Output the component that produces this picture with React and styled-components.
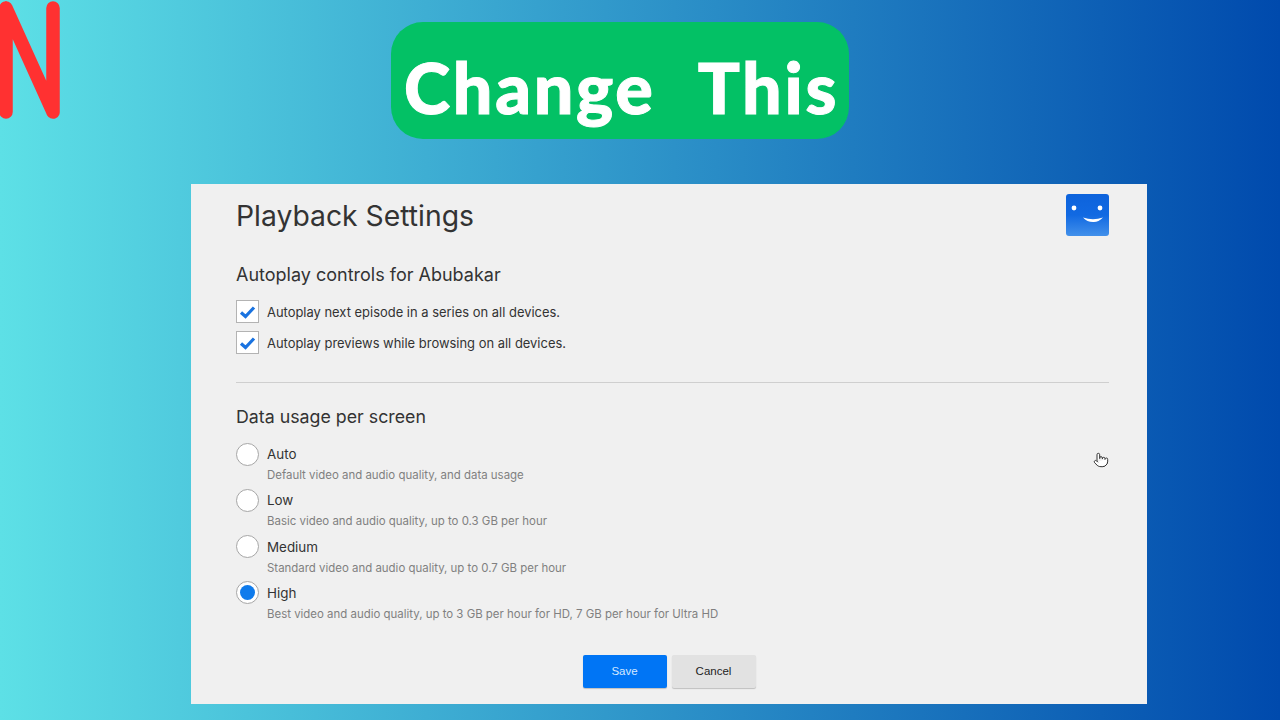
import React from 'react';
import styled, { createGlobalStyle } from 'styled-components';
import { Pointer } from 'lucide-react';

const GlobalStyle = createGlobalStyle`
  html, body {
    margin: 0;
    padding: 0;
  }
  body {
    font-family: "Inter", "Liberation Sans", sans-serif;
  }
`;

const Page = styled.div`
  width: 1280px;
  height: 720px;
  overflow: hidden;
  background: linear-gradient(90deg, #5de0e6 0%, #004aad 100%);
`;

const Header = styled.header`
  height: 184px;
  display: flex;
  align-items: flex-start;
`;

const Logo = styled.svg`
  width: 61px;
  height: 122px;
  flex: none;
`;

const Badge = styled.div`
  box-sizing: border-box;
  width: 458px;
  height: 117px;
  margin: 22px 0 0 330px;
  padding: 12px 0 0 3px;
  border-radius: 32px;
  background: #03c165;
  color: #fff;
  display: flex;
  align-items: center;
  justify-content: center;
  font-family: "Lato", sans-serif;
  font-weight: 900;
  font-size: 70px;
  letter-spacing: 2.7px;
  word-spacing: 25px;
  white-space: nowrap;
  -webkit-text-stroke: 1px #fff;
`;

const Panel = styled.main`
  position: relative;
  box-sizing: border-box;
  width: 956px;
  height: 520px;
  margin-left: 191px;
  padding: 10px 38px 0 45px;
  background: #f0f0f0;
  color: #333;
`;

const TitleRow = styled.div`
  display: flex;
  justify-content: space-between;
  align-items: flex-start;
  height: 42px;
`;

const Title = styled.h1`
  margin: 0;
  font-size: 28.3px;
  line-height: 44px;
  font-weight: 400;
  color: #333;
`;

const Avatar = styled.svg`
  width: 43px;
  height: 42px;
  flex: none;
`;

const SectionTitle = styled.h2`
  margin: ${(props) => props.$top}px 0 0;
  font-size: ${(props) => props.$size}px;
  line-height: 24px;
  font-weight: 400;
  color: #333;
`;

const CheckList = styled.div`
  display: flex;
  flex-direction: column;
  gap: 8px;
  margin-top: 13px;
`;

const OptionRow = styled.label`
  display: flex;
  align-items: center;
  gap: 8px;
  height: 23px;
  font-size: 13.4px;
  color: #333;
`;

const CheckRow = styled(OptionRow)`
  font-size: 12.95px;
`;

const CheckBox = styled.span`
  box-sizing: border-box;
  width: 23px;
  height: 23px;
  flex: none;
  display: flex;
  align-items: center;
  justify-content: center;
  background: #fff;
  border: 1px solid #b3b3b3;
`;

const Divider = styled.hr`
  margin: 28px 0 0;
  border: 0;
  border-top: 1px solid #cfcfcf;
`;

const RadioList = styled.div`
  display: flex;
  flex-direction: column;
  gap: 2px;
  margin-top: 13.5px;
`;

const RadioOption = styled.div`
  height: 44.3px;
`;

const RadioCircle = styled.span`
  box-sizing: border-box;
  width: 23px;
  height: 23px;
  flex: none;
  display: flex;
  align-items: center;
  justify-content: center;
  border-radius: 50%;
  background: #fff;
  border: 1px solid #a6a6a6;

  &::after {
    content: '';
    width: 15px;
    height: 15px;
    border-radius: 50%;
    background: ${(props) => (props.$checked ? '#0f7bec' : 'transparent')};
  }
`;

const Hint = styled.div`
  margin: 0.5px 0 0 31px;
  font-size: 11.45px;
  line-height: 18px;
  color: #808080;
`;

const Actions = styled.div`
  display: flex;
  justify-content: center;
  gap: 5px;
  margin: 29px 0 0 -7px;
`;

const Button = styled.button`
  width: 84px;
  height: 33px;
  padding: 0;
  border: 0;
  border-radius: 2px;
  font-family: "Liberation Sans", sans-serif;
  font-size: 11.5px;
  color: ${(props) => (props.$primary ? '#d5e8ff' : '#222')};
  background: ${(props) => (props.$primary ? '#0075f5' : '#e2e2e2')};
  box-shadow: 0 1px 1px rgba(0, 0, 0, 0.2);
`;

const Cursor = styled(Pointer)`
  position: absolute;
  left: 902px;
  top: 268px;
  fill: #fff;
`;

const plans = [
  { name: 'Auto', hint: 'Default video and audio quality, and data usage' },
  { name: 'Low', hint: 'Basic video and audio quality, up to 0.3 GB per hour' },
  { name: 'Medium', hint: 'Standard video and audio quality, up to 0.7 GB per hour' },
  { name: 'High', hint: 'Best video and audio quality, up to 3 GB per hour for HD, 7 GB per hour for Ultra HD', checked: true },
];

const autoplay = [
  'Autoplay next episode in a series on all devices.',
  'Autoplay previews while browsing on all devices.',
];

const App = () => {
  return (
    <>
      <GlobalStyle />
      <Page>
        <Header>
          <Logo viewBox="0 0 61 122">
            <path
              d="M6 8 L6 112 M6 8 L53 112 M53 8 L53 112"
              fill="none"
              stroke="#ff3131"
              strokeWidth="13.5"
              strokeLinecap="round"
              strokeLinejoin="round"
            />
          </Logo>
          <Badge>Change This</Badge>
        </Header>
        <Panel>
          <TitleRow>
            <Title>Playback Settings</Title>
            <Avatar viewBox="0 0 43 42">
              <defs>
                <linearGradient id="face" x1="0" y1="0" x2="0" y2="1">
                  <stop offset="0" stopColor="#0d63dc" />
                  <stop offset="0.5" stopColor="#1169e2" />
                  <stop offset="1" stopColor="#4290ea" />
                </linearGradient>
              </defs>
              <rect width="43" height="42" rx="3" fill="url(#face)" />
              <circle cx="8" cy="14" r="2.4" fill="#fff" />
              <circle cx="34" cy="14" r="2.4" fill="#fff" />
              <path d="M17 23.5 Q27 27 37 23.5 Q32 28.5 27 28 Q21 28 17 23.5 Z" fill="#fff" />
            </Avatar>
          </TitleRow>
          <SectionTitle $top={27} $size={18}>Autoplay controls for Abubakar</SectionTitle>
          <CheckList>
            {autoplay.map((text) => (
              <CheckRow key={text}>
                <CheckBox>
                  <svg width="17" height="14" viewBox="0 0 17 14">
                    <path d="M2 7.5 L6.5 11.5 L15 2.5" fill="none" stroke="#1a73e0" strokeWidth="3.2" />
                  </svg>
                </CheckBox>
                {text}
              </CheckRow>
            ))}
          </CheckList>
          <Divider />
          <SectionTitle $top={22} $size={17.8}>Data usage per screen</SectionTitle>
          <RadioList>
            {plans.map((plan) => (
              <RadioOption key={plan.name}>
                <OptionRow>
                  <RadioCircle $checked={plan.checked} />
                  {plan.name}
                </OptionRow>
                <Hint>{plan.hint}</Hint>
              </RadioOption>
            ))}
          </RadioList>
          <Actions>
            <Button $primary>Save</Button>
            <Button>Cancel</Button>
          </Actions>
          <Cursor size={16} color="#333" strokeWidth={1.5} />
        </Panel>
      </Page>
    </>
  );
};

export default App;
